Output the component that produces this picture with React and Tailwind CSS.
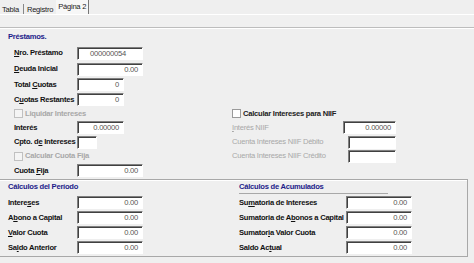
import React from 'react'

const FONT = { fontFamily: '"Liberation Sans", Arial, sans-serif' }

function U({ children }) {
  return <span className="underline underline-offset-1">{children}</span>
}

function Field({ w = 'w-[66px]', value = '', align = 'text-right' }) {
  return (
    <div
      className={`${w} h-[13px] shrink-0 bg-white border-t border-l border-t-[#808080] border-l-[#808080] border-b border-r border-b-white border-r-white shadow-[inset_1px_1px_0_#404040] ${align} pr-[4px] text-[7.6px] leading-[12px] text-[#555]`}
    >
      {value}
    </div>
  )
}

function Check({ label, disabled }) {
  return (
    <div className="flex items-center gap-[2px]">
      <div className={`w-[9px] h-[9px] border ${disabled ? 'border-[#c0c0c0] bg-[#f4f4f4]' : 'border-[#9a9a9a] bg-white'}`} />
      <span className={`font-bold ${disabled ? 'text-[#a8a8a8]' : 'text-[#222]'}`}>{label}</span>
    </div>
  )
}

function Row({ h, lw = 'w-[63px]', label, field }) {
  return (
    <div className={`flex items-center ${h}`}>
      <div className={`${lw} shrink-0 font-bold text-[#111] whitespace-nowrap`}>{label}</div>
      {field}
    </div>
  )
}

export default function App() {
  return (
    <div className="w-[474px] h-[263px] bg-[#efefef] text-[7.6px] leading-none tracking-[-0.25px] overflow-hidden" style={FONT}>
      {/* tabs */}
      <div className="flex items-end h-[14px] px-[2px] text-[#222]">
        <span className="pr-[2px]">Tabla</span>
        <span className="border-l border-[#888] h-[10px] mx-[2px]" />
        <span className="px-[1px]">Registro</span>
        <span className="ml-[2px] px-[2px] pb-[1px] h-[14px] flex items-center bg-[#f7f7f7] border-r border-[#777]">Página 2</span>
      </div>
      <div className="h-[14px] border-t border-white border-b border-b-[#bdbdbd] bg-[#f0f0f0]" />
      <div className="border-t border-white" />

      {/* préstamos */}
      <div className="h-[150px]">
        <div className="pl-[8px] pt-[4px] h-[16px] font-bold text-[#1c1c8a]">Préstamos.</div>
        <div className="flex">
          <div className="w-[232px] pl-[14px]">
            <Row h="h-[16px]" label={<><U>N</U>ro. Préstamo</>} field={<Field value="000000054" align="text-center" />} />
            <Row h="h-[16px]" label={<><U>D</U>euda Inicial</>} field={<Field value="0.00" />} />
            <Row h="h-[15px]" label={<>Total <U>C</U>uotas</>} field={<Field w="w-[47px]" value="0" />} />
            <Row h="h-[15px]" label={<>C<U>u</U>otas Restantes</>} field={<Field w="w-[47px]" value="0" />} />
            <div className="h-[13px] flex items-center"><Check disabled label="Liquidar Intereses" /></div>
            <Row h="h-[15px]" label="Interés" field={<Field w="w-[47px]" value="0.00000" />} />
            <Row h="h-[14px]" label={<>Cpto. d<U>e</U> Intereses</>} field={<Field w="w-[20px]" />} />
            <div className="h-[14px] flex items-center"><Check disabled label="Calcular Cuota Fija" /></div>
            <Row h="h-[15px]" label={<>Cuota <U>F</U>ija</>} field={<Field value="0.00" />} />
          </div>
          <div className="flex-1 pt-[62px]">
            <div className="h-[13px] flex items-center"><Check label="Calcular Intereses para NIIF" /></div>
            <div className="h-[15px] flex items-center">
              <div className="w-[111px] text-[#a8a8a8]"><U>I</U>nterés NIIF</div>
              <Field w="w-[53px]" value="0.00000" />
            </div>
            <div className="h-[14px] flex items-center">
              <div className="w-[116px] text-[#a8a8a8]">Cuenta Intereses NIIF Débito</div>
              <Field w="w-[48px]" />
            </div>
            <div className="h-[14px] flex items-center">
              <div className="w-[116px] text-[#a8a8a8]">Cuenta Intereses NIIF Crédito</div>
              <Field w="w-[48px]" />
            </div>
          </div>
        </div>
      </div>

      {/* cálculos */}
      <div className="w-[468px] h-[78px] border-t border-t-[#a8a8a8] border-r border-r-[#a8a8a8] border-b border-b-[#a8a8a8] shadow-[inset_0_1px_0_#fff]">
        <div className="flex">
          <div className="w-[239px] pl-[8px]">
            <div className="h-[14px] pt-[3px] font-bold text-[#1c1c8a]">Cálculos del Período</div>
            <div className="pt-[1px]">
              <Row h="h-[15px]" lw="w-[69px]" label={<>Intere<U>s</U>es</>} field={<Field value="0.00" />} />
              <Row h="h-[15px]" lw="w-[69px]" label={<>A<U>b</U>ono a Capital</>} field={<Field value="0.00" />} />
              <Row h="h-[15px]" lw="w-[69px]" label={<><U>V</U>alor Cuota</>} field={<Field value="0.00" />} />
              <Row h="h-[15px]" lw="w-[69px]" label={<>Sa<U>l</U>do Anterior</>} field={<Field value="0.00" />} />
            </div>
          </div>
          <div className="flex-1">
            <div className="h-[14px] pt-[3px]">
              <div className="w-[149px] pb-[2px] border-b border-[#a8a8a8] font-bold text-[#1c1c8a]">Cálculos de Acumulados</div>
            </div>
            <div className="pt-[1px]">
              {[
                <>Su<U>m</U>atoria de Intereses</>,
                <>Sumatoria de A<U>b</U>onos a Capital</>,
                <>Sumator<U>i</U>a Valor Cuota</>,
                <>Saldo Ac<U>t</U>ual</>,
              ].map((l, i) => (
                <div key={i} className="h-[15px] flex items-center">
                  <div className="w-[107px] shrink-0 font-bold text-[#111] whitespace-nowrap">{l}</div>
                  <Field value="0.00" />
                </div>
              ))}
            </div>
          </div>
        </div>
      </div>
    </div>
  )
}
